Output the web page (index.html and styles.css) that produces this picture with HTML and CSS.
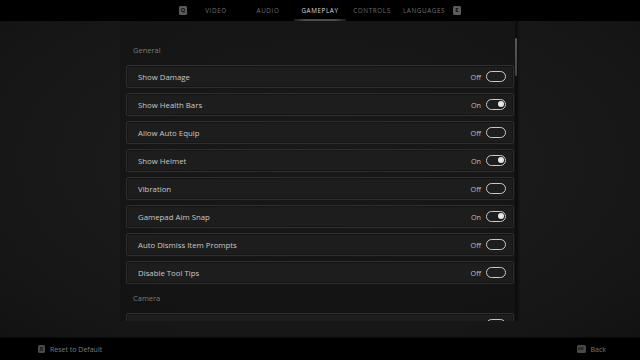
FILE: index.html
```html
<!DOCTYPE html>
<html>
<head>
<meta charset="utf-8">
<link rel="stylesheet" href="styles.css">
</head>
<body>
<header class="nav">
  <span class="key nav-key">Q</span>
  <span class="tab">VIDEO</span>
  <span class="tab">AUDIO</span>
  <span class="tab active">GAMEPLAY</span>
  <span class="tab">CONTROLS</span>
  <span class="tab">LANGUAGES</span>
  <span class="key nav-key">E</span>
</header>
<main class="main">
  <div class="panel">
    <div class="list">
      <div class="section-title">General</div>
      <div class="row"><span class="label">Show Damage</span><span class="state">Off</span><span class="toggle"></span></div>
      <div class="row"><span class="label">Show Health Bars</span><span class="state">On</span><span class="toggle on"></span></div>
      <div class="row"><span class="label">Allow Auto Equip</span><span class="state">Off</span><span class="toggle"></span></div>
      <div class="row"><span class="label">Show Helmet</span><span class="state">On</span><span class="toggle on"></span></div>
      <div class="row"><span class="label">Vibration</span><span class="state">Off</span><span class="toggle"></span></div>
      <div class="row"><span class="label">Gamepad Aim Snap</span><span class="state">On</span><span class="toggle on"></span></div>
      <div class="row"><span class="label">Auto Dismiss Item Prompts</span><span class="state">Off</span><span class="toggle"></span></div>
      <div class="row"><span class="label">Disable Tool Tips</span><span class="state">Off</span><span class="toggle"></span></div>
      <div class="section-title later">Camera</div>
      <div class="row"><span class="label"></span><span class="toggle"></span></div>
    </div>
    <div class="track"><div class="thumb"></div></div>
  </div>
</main>
<footer class="footer">
  <div class="hint"><span class="key small">R</span><span>Reset to Default</span></div>
  <div class="hint"><span class="key small wide">ESC</span><span>Back</span></div>
</footer>
</body>
</html>
```
FILE: styles.css
```css
* { box-sizing: border-box; }
html, body { margin: 0; padding: 0; }
body {
  width: 640px;
  height: 360px;
  background: #000;
  font-family: "Open Sans", "Noto Sans", sans-serif;
  display: flex;
  flex-direction: column;
  overflow: hidden;
}
.nav {
  height: 21px;
  flex: none;
  background: #000;
  display: flex;
  justify-content: center;
  align-items: center;
}
.key {
  width: 8px;
  height: 9px;
  border-radius: 1.5px;
  background: #5c5c5c;
  color: #111;
  font-size: 6px;
  font-weight: 700;
  line-height: 9px;
  text-align: center;
}
.nav-key { margin: 0 3px; }
.tab {
  width: 52px;
  height: 21px;
  line-height: 22px;
  text-align: center;
  font-size: 6.3px;
  letter-spacing: 0.6px;
  color: #6e6e6e;
  position: relative;
}
.tab.active { color: #d8d8d8; }
.tab.active::after {
  content: "";
  position: absolute;
  left: 0;
  right: 0;
  bottom: 0;
  height: 2px;
  background: linear-gradient(90deg, rgba(80,80,80,0.3), #4a4a4a 20%, #4a4a4a 80%, rgba(80,80,80,0.3));
}
.main {
  flex: 1;
  background: radial-gradient(ellipse at 50% 45%, #1e1e1e 0%, #1a1a1a 45%, #161616 80%, #121212 100%);
  display: flex;
  justify-content: center;
  border-bottom: 1px solid #0a0a0a;
}
.panel {
  width: 400px;
  height: 300px;
  position: relative;
  overflow: hidden;
  background: linear-gradient(180deg, rgba(14,14,14,0.25), rgba(14,14,14,0.45));
}
.list {
  padding: 19px 6px 0 6px;
}
.section-title {
  height: 12px;
  margin: 4px 0 9px 7px;
  font-size: 7.5px;
  line-height: 12px;
  color: #7a7a7a;
}
.section-title.later { margin: 8px 0 9px 7px; }
.row {
  height: 23px;
  margin-bottom: 5px;
  display: flex;
  align-items: center;
  padding: 0 7px 0 11px;
  background: #1d1d1d;
  border: 1px solid #2e2e2e;
  border-radius: 2px;
  box-shadow: inset 0 0 0 1px #151515;
}
.label {
  flex: 1;
  font-size: 7.8px;
  color: #c8c8c8;
}
.state {
  font-size: 7.2px;
  color: #bdbdbd;
  margin-right: 5px;
}
.toggle {
  width: 20px;
  height: 11px;
  border: 1.5px solid #c9c9c9;
  border-radius: 6px;
  position: relative;
}
.toggle.on::after {
  content: "";
  position: absolute;
  right: 1px;
  top: 1px;
  width: 6px;
  height: 6px;
  border-radius: 50%;
  background: #e8e8e8;
}
.track {
  position: absolute;
  right: 2px;
  top: 0;
  bottom: 0;
  width: 3px;
  background: #0d0d0d;
}
.thumb {
  margin-top: 17px;
  height: 38px;
  width: 2px;
  background: linear-gradient(180deg, #5a5a5a, #444);
  border-radius: 1px;
}
.footer {
  height: 22px;
  flex: none;
  background: #000;
  display: flex;
  justify-content: space-between;
  align-items: center;
  padding: 0 34px 0 38px;
}
.hint {
  display: flex;
  align-items: center;
  gap: 5px;
  font-size: 7px;
  color: #7c7c7c;
}
.key.small {
  width: 7px;
  height: 8px;
  font-size: 5px;
  line-height: 8px;
  background: #4a4a4a;
}
.key.wide {
  width: 9px;
  font-size: 3.5px;
}
```
